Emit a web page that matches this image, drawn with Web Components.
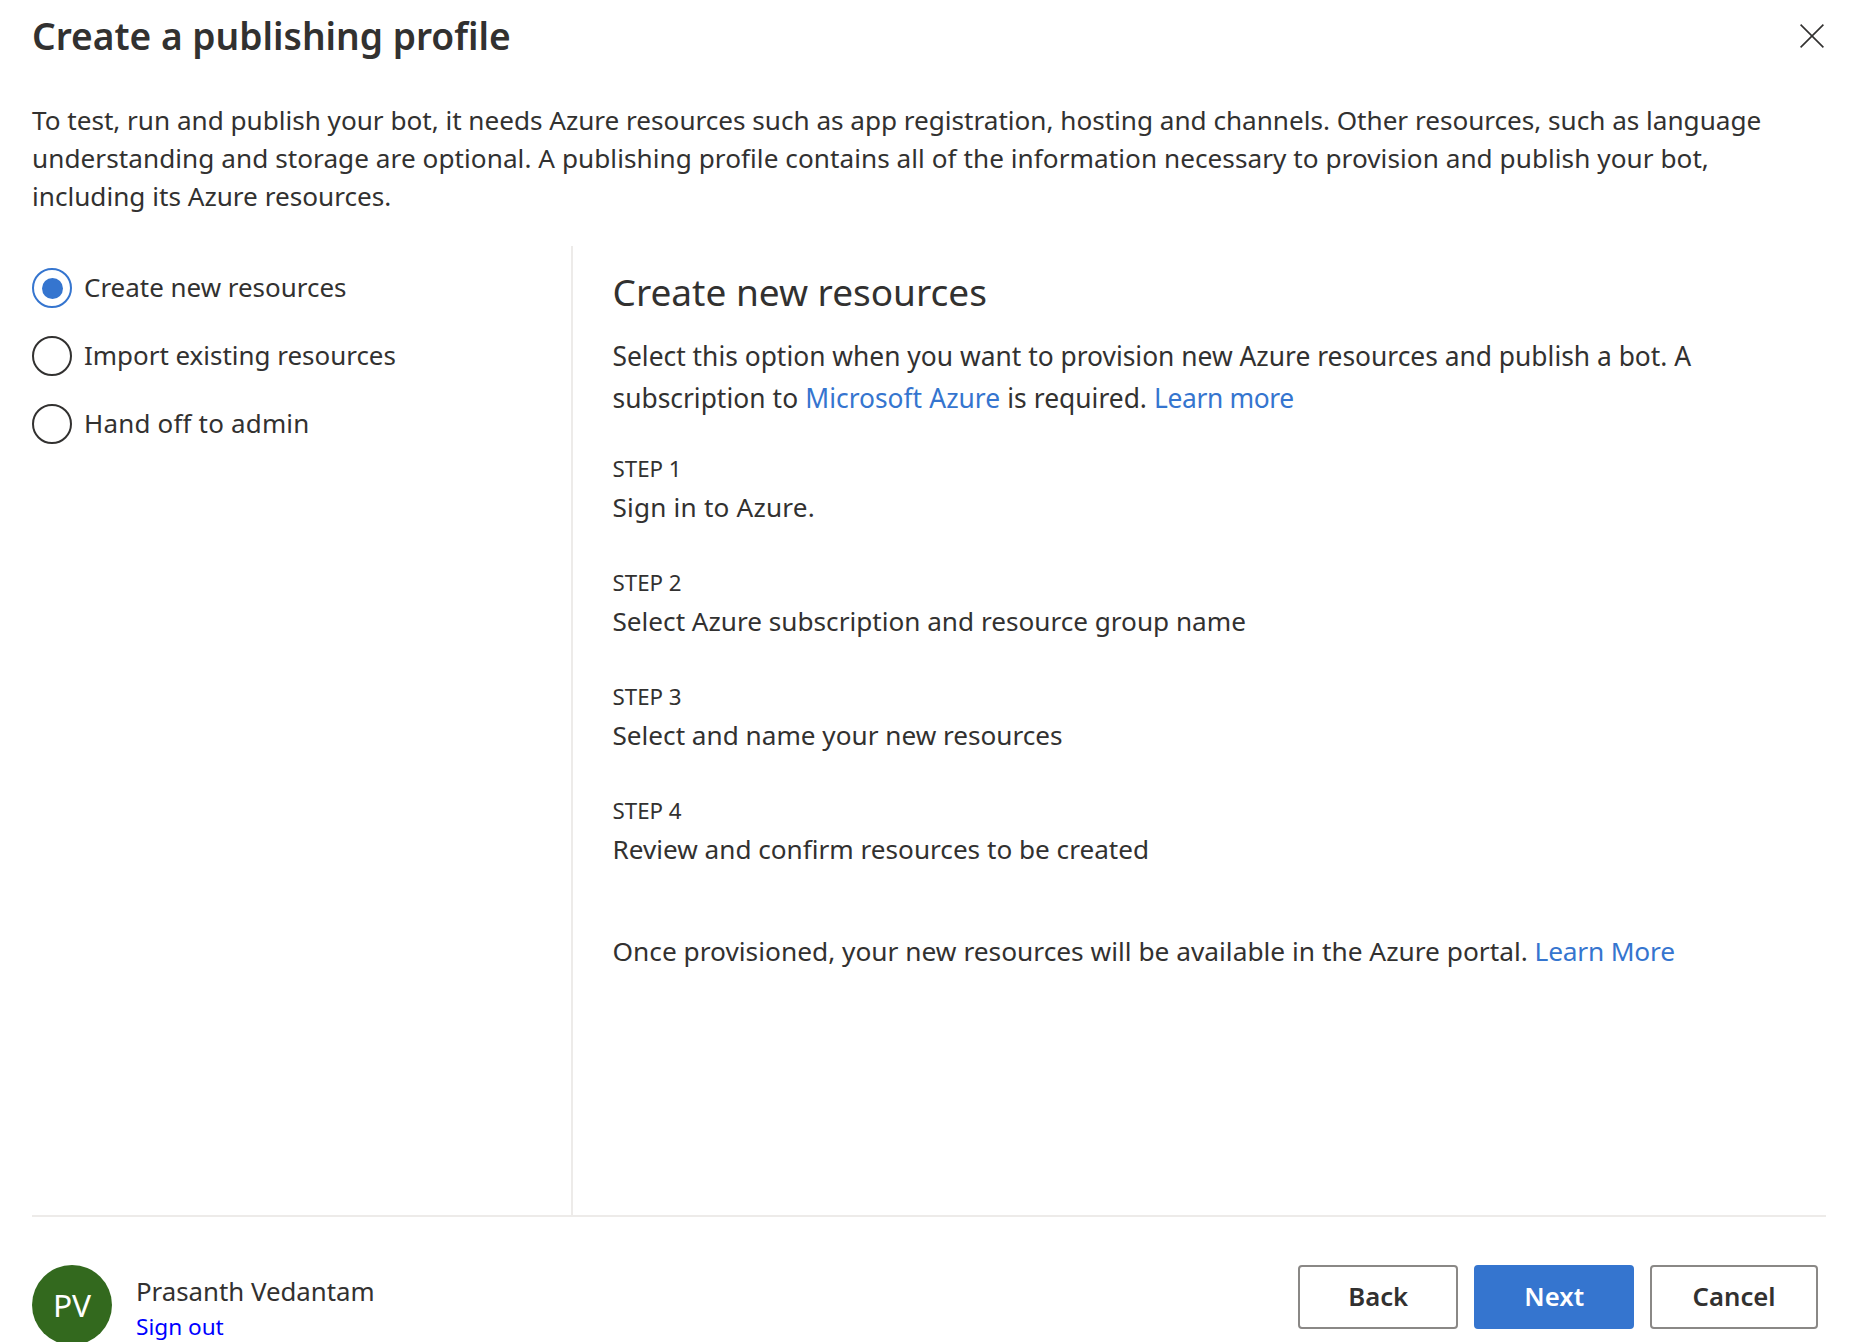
<!DOCTYPE html>
<html lang="en"><head><meta charset="utf-8"><title>Create a publishing profile</title>
<style>
html,body{margin:0;padding:0;background:#fff}
body{width:1850px;height:1342px;overflow:hidden;font-family:"Noto Sans","Open Sans",sans-serif;color:#323130}
.line{display:block;white-space:nowrap}
</style></head><body>
<pub-dialog>
  <span slot="title">Create a publishing profile</span>
  <span slot="intro">
    <span class="line" style="letter-spacing:-.02px">To test, run and publish your bot, it needs Azure resources such as app registration, hosting and channels. Other resources, such as language</span>
    <span class="line" style="letter-spacing:.05px">understanding and storage are optional. A publishing profile contains all of the information necessary to provision and publish your bot,</span>
    <span class="line">including its Azure resources.</span>
  </span>
  <radio-option slot="options" checked>Create new resources</radio-option>
  <radio-option slot="options">Import existing resources</radio-option>
  <radio-option slot="options" style="letter-spacing:.2px">Hand off to admin</radio-option>
  <span slot="heading">Create new resources</span>
  <span slot="lead">
    <span class="line">Select this option when you want to provision new Azure resources and publish a bot. A</span>
    <span class="line" style="word-spacing:.3px">subscription to <fluent-link>Microsoft Azure</fluent-link> is required. <fluent-link style="letter-spacing:-.4px">Learn more</fluent-link></span>
  </span>
  <step-item slot="steps" label="STEP 1" style="letter-spacing:.2px">Sign in to Azure.</step-item>
  <step-item slot="steps" label="STEP 2">Select Azure subscription and resource group name</step-item>
  <step-item slot="steps" label="STEP 3">Select and name your new resources</step-item>
  <step-item slot="steps" label="STEP 4">Review and confirm resources to be created</step-item>
  <span slot="note">Once provisioned, your new resources will be available in the Azure portal. <fluent-link style="letter-spacing:-.2px">Learn More</fluent-link></span>
  <user-card slot="user" initials="PV" name="Prasanth Vedantam"></user-card>
  <app-button slot="actions">Back</app-button>
  <app-button slot="actions" primary>Next</app-button>
  <app-button slot="actions">Cancel</app-button>
</pub-dialog>
<script>
const ink='#323130',blue='#3575cf',rule='#edebe9';

customElements.define('fluent-link',class extends HTMLElement{constructor(){super();this.attachShadow({mode:'open'}).innerHTML=`<style>:host{display:inline;color:${blue}}a{color:inherit;text-decoration:none}</style><a href="#"><slot></slot></a>`}});

customElements.define('radio-option',class extends HTMLElement{
  constructor(){super();this.attachShadow({mode:'open'}).innerHTML=`<style>
  :host{display:flex;align-items:center;gap:12px;height:40px;font-size:25.95px;line-height:38px;color:${ink}}
  .ring{box-sizing:border-box;flex:none;width:40px;height:40px;border-radius:50%;border:2px solid ${ink};display:flex;align-items:center;justify-content:center}
  :host([checked]) .ring{border-color:${blue}}
  :host([checked]) .ring::after{content:"";width:21px;height:21px;border-radius:50%;background:${blue}}
  .t{padding-bottom:2px}
  </style><span class="ring"></span><span class="t"><slot></slot></span>`}
});

customElements.define('step-item',class extends HTMLElement{
  constructor(){super();this.attachShadow({mode:'open'}).innerHTML=`<style>
  :host{display:block}
  .l{font-size:22.3px;line-height:30px;margin-bottom:4px;letter-spacing:0}
  .d{font-size:26.15px;line-height:38px}
  </style><div class="l"></div><div class="d"><slot></slot></div>`}
  connectedCallback(){this.shadowRoot.querySelector('.l').textContent=this.getAttribute('label')}
});

customElements.define('app-button',class extends HTMLElement{
  constructor(){super();this.attachShadow({mode:'open'}).innerHTML=`<style>
  :host{display:block}
  button{box-sizing:border-box;display:block;height:64px;min-width:160px;padding:0 40.4px;margin:0;border:2px solid #8a8886;border-radius:4px;background:#fff;color:${ink};font:600 25.7px/1 "Noto Sans","Open Sans",sans-serif}
  :host([primary]) button{background:${blue};border-color:${blue};color:#fff}
  </style><button type="button"><slot></slot></button>`}
});

customElements.define('user-card',class extends HTMLElement{
  constructor(){super();this.attachShadow({mode:'open'}).innerHTML=`<style>
  :host{display:flex;gap:24px;align-items:flex-start}
  .a{flex:none;width:80px;height:80px;border-radius:50%;background:#33691e;color:#fff;display:flex;align-items:center;justify-content:center;font-size:31.7px;line-height:1}
  .t{padding-top:8px}
  .n{font-size:25.8px;line-height:36px;color:${ink}}
  a{display:block;margin-top:3px;font-size:22.6px;line-height:30px;color:#0000ff;text-decoration:none}
  </style><div class="a"></div><div class="t"><div class="n"></div><a href="#">Sign out</a></div>`}
  connectedCallback(){const s=this.shadowRoot;s.querySelector('.a').textContent=this.getAttribute('initials');s.querySelector('.n').textContent=this.getAttribute('name')}
});

customElements.define('pub-dialog',class extends HTMLElement{
  constructor(){super();this.attachShadow({mode:'open'}).innerHTML=`<style>
  :host{display:flex;flex-direction:column;box-sizing:border-box;width:1850px;height:1342px;padding:0 24px 0 32px;overflow:hidden;color:${ink}}
  header{display:flex;justify-content:space-between;align-items:flex-start;padding:11px 2px 0 0}
  h1{margin:0;font-size:37.15px;line-height:50px;font-weight:600}
  svg{display:block;flex:none;margin-top:13px}
  .intro{margin:40px 0 0;font-size:26.15px;line-height:38px}
  .main{flex:none;display:flex;height:969px;margin-top:31px;border-bottom:2px solid ${rule}}
  .left{box-sizing:border-box;flex:none;width:540.5px;border-right:2px solid ${rule};padding-top:22px;display:flex;flex-direction:column;gap:28px}
  .right{flex:1;min-width:0;padding:21px 0 0 40px}
  h2{margin:0;font-size:37px;line-height:50px;font-weight:400}
  .lead{margin:18px 0 0;font-size:26.39px;line-height:42px}
  .steps{margin-top:35px;display:flex;flex-direction:column;gap:42px}
  .note{margin:64px 0 0;font-size:26.3px;line-height:38px}
  footer{display:flex;justify-content:space-between;align-items:flex-start;padding:48px 8px 0 0}
  .actions{display:flex;gap:16px}
  </style>
  <header><h1><slot name="title"></slot></h1>
    <svg width="24" height="24" viewBox="0 0 24 24" aria-label="Close"><path d="M.6.6 23.4 23.4M23.4.6.6 23.4" fill="none" stroke="${ink}" stroke-width="1.6"/></svg>
  </header>
  <div class="intro"><slot name="intro"></slot></div>
  <div class="main">
    <div class="left"><slot name="options"></slot></div>
    <div class="right">
      <h2><slot name="heading"></slot></h2>
      <div class="lead"><slot name="lead"></slot></div>
      <div class="steps"><slot name="steps"></slot></div>
      <div class="note"><slot name="note"></slot></div>
    </div>
  </div>
  <footer><slot name="user"></slot><div class="actions"><slot name="actions"></slot></div></footer>`}
});
</script>
</body></html>
